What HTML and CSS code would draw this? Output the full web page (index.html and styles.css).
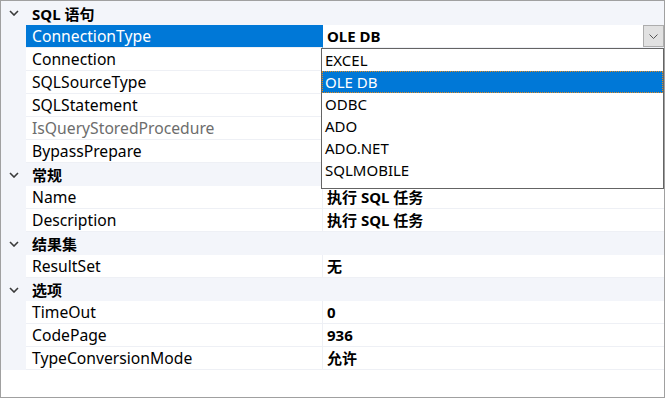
FILE: index.html
```html
<!DOCTYPE html>
<html lang="zh-CN">
<head>
  <meta charset="UTF-8" />
  <title>属性</title>
  <link rel="stylesheet" href="styles.css">
</head>
<body>
  <div class="grid">
    <div class="cat first">
      <span class="gutter"><svg class="chev" width="10" height="6" viewBox="0 0 10 6"><polyline points="1,1 5,5 9,1" /></svg></span>
      <span class="cat-title">SQL 语句</span>
    </div>
    <div class="row selected">
      <span class="gutter"></span>
      <span class="name">ConnectionType</span>
      <span class="value">OLE DB
        <span class="drop-btn"><svg width="9" height="5" viewBox="0 0 9 5"><polyline points="0.5,0.5 4.5,4.5 8.5,0.5" /></svg></span>
      </span>
    </div>
    <div class="row"><span class="gutter"></span><span class="name">Connection</span><span class="value"></span></div>
    <div class="row"><span class="gutter"></span><span class="name">SQLSourceType</span><span class="value"></span></div>
    <div class="row"><span class="gutter"></span><span class="name">SQLStatement</span><span class="value"></span></div>
    <div class="row"><span class="gutter"></span><span class="name disabled">IsQueryStoredProcedure</span><span class="value"></span></div>
    <div class="row"><span class="gutter"></span><span class="name">BypassPrepare</span><span class="value"></span></div>

    <div class="cat">
      <span class="gutter"><svg class="chev" width="10" height="6" viewBox="0 0 10 6"><polyline points="1,1 5,5 9,1" /></svg></span>
      <span class="cat-title">常规</span>
    </div>
    <div class="row"><span class="gutter"></span><span class="name">Name</span><span class="value">执行 SQL 任务</span></div>
    <div class="row"><span class="gutter"></span><span class="name">Description</span><span class="value">执行 SQL 任务</span></div>

    <div class="cat">
      <span class="gutter"><svg class="chev" width="10" height="6" viewBox="0 0 10 6"><polyline points="1,1 5,5 9,1" /></svg></span>
      <span class="cat-title">结果集</span>
    </div>
    <div class="row"><span class="gutter"></span><span class="name">ResultSet</span><span class="value">无</span></div>

    <div class="cat">
      <span class="gutter"><svg class="chev" width="10" height="6" viewBox="0 0 10 6"><polyline points="1,1 5,5 9,1" /></svg></span>
      <span class="cat-title">选项</span>
    </div>
    <div class="row"><span class="gutter"></span><span class="name">TimeOut</span><span class="value">0</span></div>
    <div class="row"><span class="gutter"></span><span class="name">CodePage</span><span class="value">936</span></div>
    <div class="row"><span class="gutter"></span><span class="name">TypeConversionMode</span><span class="value">允许</span></div>

    <!-- open dropdown list for ConnectionType -->
    <ul class="dropdown">
      <li>EXCEL</li>
      <li class="active">OLE DB</li>
      <li>ODBC</li>
      <li>ADO</li>
      <li>ADO.NET</li>
      <li>SQLMOBILE</li>
    </ul>
  </div>
</body>
</html>
```

FILE: styles.css
```css
html, body {
  margin: 0;
  padding: 0;
  background: #ffffff;
}
.grid {
  position: relative;
  width: 665px;
  height: 398px;
  box-sizing: border-box;
  border: 1px solid #a0a0a0;
  background: #ffffff;
  font-family: "Noto Sans", "Noto Sans CJK SC", sans-serif;
  font-size: 15px;
  color: #000000;
  overflow: hidden;
}
.gutter {
  width: 25px;
  flex: none;
  background: #f3f5fa;
  display: flex;
  align-items: center;
  justify-content: center;
}
.chev polyline {
  fill: none;
  stroke: #3a3a3a;
  stroke-width: 1.6;
}
.cat {
  display: flex;
  height: 23px;
  background: #f3f5fa;
  align-items: center;
}
.cat.first {
  height: 24px;
}
.cat-title {
  padding-left: 6px;
  font-weight: bold;
}
.row {
  display: flex;
  height: 23px;
}
.name {
  width: 290px;
  flex: none;
  padding-left: 6px;
  border-bottom: 1px solid #eef0f5;
  line-height: 22px;
  font-size: 15.7px;
  white-space: nowrap;
}
.name.disabled {
  color: #6d6d6d;
}
.value {
  position: relative;
  flex: 1;
  border-left: 1px solid #eef0f5;
  border-bottom: 1px solid #eef0f5;
  padding-left: 4px;
  line-height: 22px;
  font-weight: bold;
  white-space: nowrap;
}
.row.selected .name {
  background: #0078d7;
  color: #ffffff;
}
.row.selected .value {
  border-left: 1px solid #0078d7;
}
.drop-btn {
  position: absolute;
  right: 0;
  top: 0;
  width: 19px;
  height: 20px;
  background: #e1e1e1;
  border: 1px solid #adadad;
  display: flex;
  align-items: center;
  justify-content: center;
}
.drop-btn polyline {
  fill: none;
  stroke: #555555;
  stroke-width: 1;
}
.dropdown {
  position: absolute;
  left: 320px;
  top: 47px;
  width: 341px;
  height: 139px;
  margin: 0;
  padding: 0;
  list-style: none;
  background: #ffffff;
  border: 1px solid #646464;
}
.dropdown li {
  height: 22px;
  line-height: 22px;
  padding-left: 3px;
  box-sizing: border-box;
}
.dropdown li.active {
  background: #0078d7;
  color: #ffffff;
  outline: 1px dotted #e08a20;
  outline-offset: -1px;
}
```
